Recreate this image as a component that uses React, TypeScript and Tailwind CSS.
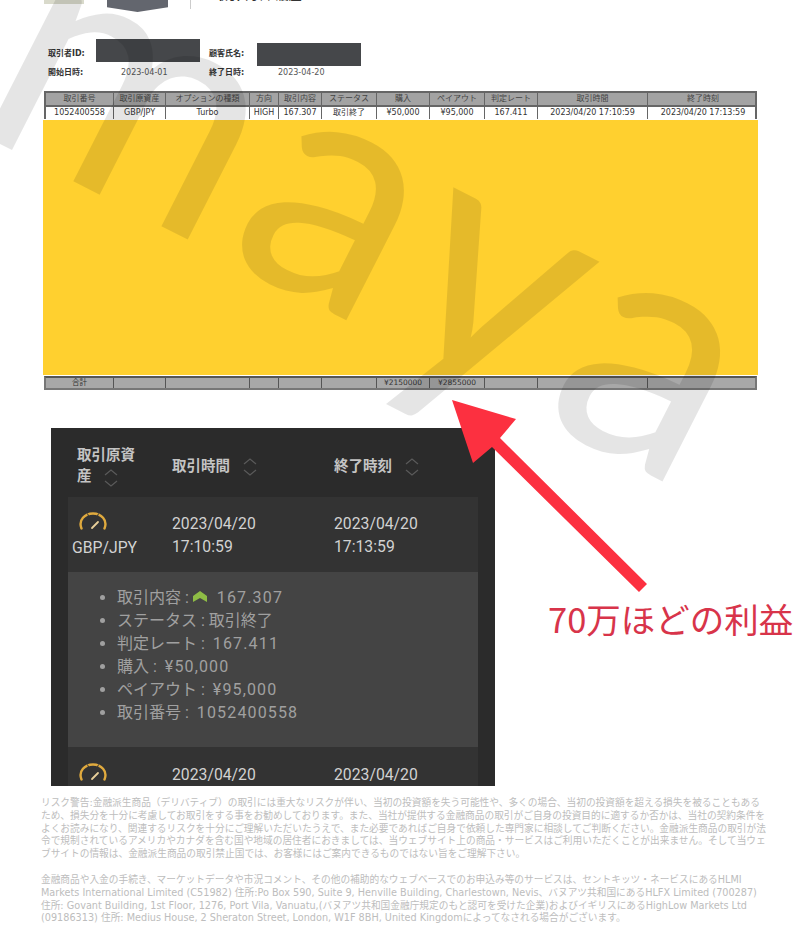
const SANS = "font-['DejaVu_Sans','Noto_Sans_CJK_JP',sans-serif]";

const COLUMNS = [
  { label: '取引番号', value: '1052400558', total: '合計', width: 'w-[68px]' },
  { label: '取引原資産', value: 'GBP/JPY', total: '', width: 'w-[52px]' },
  { label: 'オプションの種類', value: 'Turbo', total: '', width: 'w-[84px]' },
  { label: '方向', value: 'HIGH', total: '', width: 'w-[29px]' },
  { label: '取引内容', value: '167.307', total: '', width: 'w-[43px]' },
  { label: 'ステータス', value: '取引終了', total: '', width: 'w-[55px]' },
  { label: '購入', value: '¥50,000', total: '¥2150000', width: 'w-[53px]' },
  { label: 'ペイアウト', value: '¥95,000', total: '¥2855000', width: 'w-[55px]' },
  { label: '判定レート', value: '167.411', total: '', width: 'w-[53px]' },
  { label: '取引時間', value: '2023/04/20 17:10:59', total: '', width: 'w-[110px]' },
  { label: '終了時刻', value: '2023/04/20 17:13:59', total: '', width: 'w-[110px]' },
];

const DETAILS = [
  { label: 'ステータス', value: '取引終了', numeric: false },
  { label: '判定レート', value: '167.411', numeric: true },
  { label: '購入', value: '¥50,000', numeric: true },
  { label: 'ペイアウト', value: '¥95,000', numeric: true },
  { label: '取引番号', value: '1052400558', numeric: true },
];

function Gauge() {
  return (
    <svg className="h-[19px] w-[30px]" viewBox="0 0 30 19" fill="none" strokeLinecap="round">
      <path d="M3.500 17.500C0 9 7 2.500 15 2.500s15 6.500 11.500 15" stroke="#e0aa3e" strokeWidth="2.400" />
      <path d="M9.500 2.500l1 2.500M20.500 2.500l-1 2.500" stroke="#333333" strokeWidth="1" strokeLinecap="butt" />
      <path d="M14 17l6-6" stroke="#e8cf9a" strokeWidth="1.800" />
    </svg>
  );
}

function SortIcon() {
  return (
    <svg className="h-[20px] w-[16px]" viewBox="0 0 16 20" fill="none" stroke="#5a5a5a" strokeWidth="1.200">
      <path d="M2 7l6-5 6 5M2 13l6 5 6-5" />
    </svg>
  );
}

export default function App() {
  return (
    <div className={`relative h-[935px] w-[800px] overflow-hidden bg-white ${SANS}`}>
      {/* page header, cut off by the top edge */}
      <div className="flex h-[14px] items-start">
        <div className="ml-[44px] h-[4px] w-[40px] bg-[#d9dacb]" />
        <div className="ml-[23px] h-[12px] w-[61px] bg-[#63666e] [clip-path:polygon(0_0,100%_0,100%_60%,50%_100%,0_60%)]" />
        <div className="ml-[22px] h-[9px] w-px bg-[#ccc]" />
        <div className="ml-[24px] -mt-[13px] text-[13px] leading-[16px] font-bold whitespace-nowrap text-[#333]">
          取引 <span className="font-normal">月日 履歴</span>
        </div>
      </div>

      {/* account info */}
      <div className="mt-[25px] ml-[48px] text-[8px] leading-[12px] text-[#333]">
        <div className="flex h-[28px] items-start">
          <div className="mt-[9px] w-[48px] font-bold">取引者ID:</div>
          <div className="h-[23px] w-[104px] bg-[#45474a]" />
          <div className="mt-[9px] ml-[9px] w-[48px] font-bold">顧客氏名:</div>
          <div className="mt-[4px] h-[23px] w-[104px] bg-[#45474a]" />
        </div>
        <div className="flex h-[12px]">
          <div className="w-[73px] font-bold">開始日時:</div>
          <div className="w-[88px] text-[#555]">2023-04-01</div>
          <div className="w-[69px] font-bold">終了日時:</div>
          <div className="text-[#555]">2023-04-20</div>
        </div>
      </div>

      {/* transaction table */}
      <div className="mt-[12px] ml-[44px] w-[713px] text-center text-[8px] leading-[12px] text-[#333]">
        <div className="flex border-2 border-b-0 border-[#666] bg-[#a3a3a3] text-[#444]">
          {COLUMNS.map((col) => (
            <div key={col.label} className={`${col.width} shrink-0 truncate border-r border-[#666] last:border-r-0`}>{col.label}</div>
          ))}
        </div>
        <div className="flex border-x-2 border-t-2 border-[#666] bg-white">
          {COLUMNS.map((col) => (
            <div key={col.label} className={`${col.width} shrink-0 truncate border-r border-[#666] last:border-r-0`}>{col.value}</div>
          ))}
        </div>
        <div className="-mx-px mt-px h-[255px] bg-[#ffd02f]" />
        <div className="mt-px flex border-2 border-x-[#777] border-t-[#555] border-b-[#777] bg-[#a8a8a8] text-[7.500px] leading-[10px]">
          {COLUMNS.map((col) => (
            <div key={col.label} className={`${col.width} shrink-0 truncate border-r border-[#555] last:border-r-0`}>{col.total}</div>
          ))}
        </div>
      </div>

      {/* mobile screenshot */}
      <div className="mt-[38px] ml-[51px] h-[358px] w-[444px] overflow-hidden bg-[#2b2b2b] font-['Roboto','Noto_Sans_CJK_JP',sans-serif]">
        <div className="grid h-[69px] grid-cols-[121px_162px_auto] items-center pt-[8px] text-[14.500px] font-bold text-[#c4c4c4]">
          <div className="w-[90px] pl-[26px] leading-[21px]">
            取引原資産<span className="ml-[11px] inline-block align-middle"><SortIcon /></span>
          </div>
          <div className="flex items-center gap-[12px]">取引時間 <SortIcon /></div>
          <div className="flex items-center gap-[12px]">終了時刻 <SortIcon /></div>
        </div>
        <div className="mx-[17px] bg-[#333333]">
          <div className="grid h-[75px] grid-cols-[104px_162px_auto] text-[15.750px] leading-[23px] text-[#d2d2d2]">
            <div className="flex flex-col pt-[14px] pl-[4px]">
              <div className="h-[25px] pl-[6px]"><Gauge /></div>
              <div>GBP/JPY</div>
            </div>
            <div className="pt-[15px]">2023/04/20<br />17:10:59</div>
            <div className="pt-[15px]">2023/04/20<br />17:13:59</div>
          </div>
          <div className="h-[175px] bg-[#444444] pt-[14px] pl-[49px] text-[16px] leading-[23px] text-[#a0a0a0]">
            <ul className="list-disc">
              <li>
                取引内容 : <svg className="inline h-[12px] w-[14px] align-baseline" viewBox="0 0 14 12"><path d="M0 11V5l7-5 7 5v6l-7-4z" fill="#8ebc45" /></svg> <span className="ml-[6px] tracking-[1.150px]">167.307</span>
              </li>
              {DETAILS.map((item) => (
                <li key={item.label}>
                  {item.label} : <span className={item.numeric ? 'ml-[4px] tracking-[1.150px]' : ''}>{item.value}</span>
                </li>
              ))}
            </ul>
          </div>
          <div className="grid h-[40px] grid-cols-[104px_162px_auto] text-[15.750px] leading-[23px] text-[#d2d2d2]">
            <div className="pt-[15px] pl-[10px]"><Gauge /></div>
            <div className="pt-[16px]">2023/04/20</div>
            <div className="pt-[16px]">2023/04/20</div>
          </div>
        </div>
      </div>

      {/* disclaimer */}
      <div className="mt-[11px] ml-[41px] w-[727px] text-[9.700px] leading-[12.800px] text-[#bdbdbd]">
        <p>リスク警告:金融派生商品（デリバティブ）の取引には重大なリスクが伴い、当初の投資額を失う可能性や、多くの場合、当初の投資額を超える損失を被ることもあるため、損失分を十分に考慮してお取引をする事をお勧めしております。また、当社が提供する金融商品の取引がご自身の投資目的に適するか否かは、当社の契約条件をよくお読みになり、関連するリスクを十分にご理解いただいたうえで、また必要であればご自身で依頼した専門家に相談してご判断ください。金融派生商品の取引が法令で規制されているアメリカやカナダを含む国や地域の居住者におきましては、当ウェブサイト上の商品・サービスはご利用いただくことが出来ません。そして当ウェブサイトの情報は、金融派生商品の取引禁止国では、お客様にはご案内できるものではない旨をご理解下さい。</p>
        <p className="mt-[13px]">金融商品や入金の手続き、マーケットデータや市況コメント、その他の補助的なウェブベースでのお申込み等のサービスは、セントキッツ・ネービスにあるHLMI Markets International Limited (C51982) 住所:Po Box 590, Suite 9, Henville Building, Charlestown, Nevis、バヌアツ共和国にあるHLFX Limited (700287) 住所: Govant Building, 1st Floor, 1276, Port Vila, Vanuatu,(バヌアツ共和国金融庁規定のもと認可を受けた企業)およびイギリスにあるHighLow Markets Ltd (09186313) 住所: Medius House, 2 Sheraton Street, London, W1F 8BH, United Kingdomによってなされる場合がございます。</p>
      </div>

      {/* watermark over the document */}
      <div className="pointer-events-none absolute top-[-135px] left-[98px] origin-top-left rotate-[27deg] font-['Lato',sans-serif] text-[330px] leading-none tracking-[14px] whitespace-nowrap text-black/10">
        maya
      </div>

      {/* annotation */}
      <svg className="pointer-events-none absolute top-[395px] left-[445px] h-[200px] w-[210px]" viewBox="0 0 210 200">
        <path d="M7 5L71 24L55 43L202 189L194 197L47 52L28 68Z" fill="#fc3040" />
      </svg>
      <div className="absolute top-[598px] left-[548px] font-['Noto_Sans_CJK_JP',sans-serif] text-[34.500px] leading-[40px] whitespace-nowrap text-[#d8344a]">
        70万ほどの利益
      </div>
    </div>
  );
}
